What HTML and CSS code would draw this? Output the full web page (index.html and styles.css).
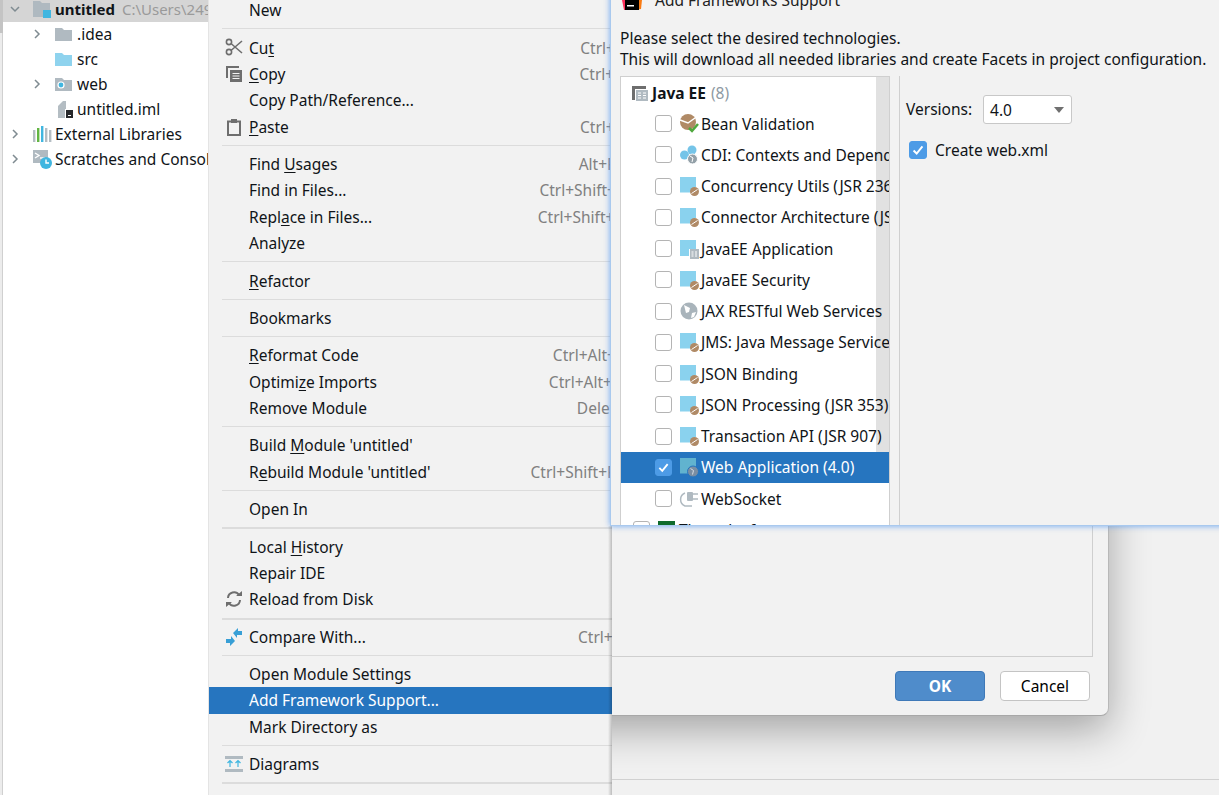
FILE: index.html
```html
<!DOCTYPE html>
<html lang="en">
<head>
<meta charset="utf-8">
<title>Add Frameworks Support</title>
<link rel="stylesheet" href="styles.css">
</head>
<body>
<div class="desktop">

  <aside class="tree">
    <div class="tree-row selected lvl0">
      <svg class="chev" viewBox="0 0 12 12"><path d="M2 4l4 4 4-4"/></svg>
      <svg class="ic" viewBox="0 0 20 20"><path d="M1 2h7l2 2h8v14H1z" fill="#afb9c0"/><rect x="11" y="11" width="8" height="8" fill="#40b6e0"/></svg>
      <b>untitled</b><span class="muted">C:\Users\2497</span>
    </div>
    <div class="tree-row lvl1">
      <svg class="chev" viewBox="0 0 12 12"><path d="M4 2l4 4-4 4"/></svg>
      <svg class="ic" viewBox="0 0 20 20"><path d="M1 4h7l2 2h8v11H1z" fill="#b0bac1"/></svg>
      <span>.idea</span>
    </div>
    <div class="tree-row lvl1">
      <span class="chev"></span>
      <svg class="ic" viewBox="0 0 20 20"><path d="M1 4h7l2 2h8v11H1z" fill="#8fd3ee"/></svg>
      <span>src</span>
    </div>
    <div class="tree-row lvl1">
      <svg class="chev" viewBox="0 0 12 12"><path d="M4 2l4 4-4 4"/></svg>
      <svg class="ic" viewBox="0 0 20 20"><path d="M1 4h7l2 2h8v11H1z" fill="#b0bac1"/><circle cx="7" cy="11" r="3.6" fill="#fff"/><circle cx="7" cy="11" r="2.4" fill="#40b6e0"/></svg>
      <span>web</span>
    </div>
    <div class="tree-row lvl1">
      <span class="chev"></span>
      <svg class="ic" viewBox="0 0 20 20"><path d="M4 7l5-5h3v17H4z" fill="#b4bdc3"/><rect x="11" y="10" width="8" height="9" fill="#fff"/><rect x="12" y="11" width="7" height="8" fill="#26282b"/><rect x="14" y="16" width="3" height="1" fill="#fff"/></svg>
      <span>untitled.iml</span>
    </div>
    <div class="tree-row lvl0">
      <svg class="chev" viewBox="0 0 12 12"><path d="M4 2l4 4-4 4"/></svg>
      <svg class="ic" viewBox="0 0 20 20"><rect x="1" y="6" width="2.4" height="12" fill="#b4bdc3"/><rect x="5" y="4" width="2.4" height="14" fill="#62b543"/><rect x="9" y="2" width="2.4" height="16" fill="#40b6e0"/><rect x="13" y="4" width="2.4" height="14" fill="#b4bdc3"/><rect x="17" y="6" width="2.4" height="12" fill="#b4bdc3"/></svg>
      <span>External Libraries</span>
    </div>
    <div class="tree-row lvl0">
      <svg class="chev" viewBox="0 0 12 12"><path d="M4 2l4 4-4 4"/></svg>
      <svg class="ic" viewBox="0 0 20 20"><rect x="1" y="1" width="15" height="13" fill="#b0bac1"/><path d="M3 4l4 2.5L3 9" fill="none" stroke="#fff" stroke-width="1.4"/><path d="M8 9h5" stroke="#fff" stroke-width="1.4"/><circle cx="14" cy="14" r="6" fill="#40b6e0"/><path d="M14 10.5V14h3" fill="none" stroke="#fff" stroke-width="1.4"/></svg>
      <span>Scratches and Consoles</span>
    </div>
  </aside>

  <div class="bottom-bar"></div>

  <section class="back-dialog">
    <div class="back-panel"></div>
    <div class="actions">
      <button class="btn primary">OK</button>
      <button class="btn">Cancel</button>
    </div>
  </section>

  <nav class="menu">
    <div class="item"><span class="label">New</span></div>
    <hr>
    <div class="item"><svg class="mi" viewBox="0 0 18 18"><g fill="none" stroke="#6e6e6e" stroke-width="1.6"><circle cx="4" cy="4" r="2.6"/><circle cx="4" cy="14" r="2.6"/><path d="M6 5.500L17 15M6 12.500L17 3"/></g></svg><span class="label">Cu<u>t</u></span><span class="key">Ctrl+X</span></div>
    <div class="item"><svg class="mi" viewBox="0 0 18 18"><path d="M1 1h13v2H3v10H1z" fill="#6e6e6e"/><rect x="5" y="5" width="12" height="12" fill="#6e6e6e"/><path d="M7.500 8.500h7M7.500 11h7M7.500 13.500h7" stroke="#f2f2f2"/></svg><span class="label"><u>C</u>opy</span><span class="key">Ctrl+C</span></div>
    <div class="item"><span class="label">Copy Path/Reference...</span></div>
    <div class="item"><svg class="mi" viewBox="0 0 18 18"><path d="M3 3.500h12v13.500H3z" fill="none" stroke="#6e6e6e" stroke-width="2"/><rect x="6" y="1" width="6" height="4" fill="#6e6e6e"/></svg><span class="label"><u>P</u>aste</span><span class="key">Ctrl+V</span></div>
    <hr>
    <div class="item"><span class="label">Find <u>U</u>sages</span><span class="key">Alt+F7</span></div>
    <div class="item"><span class="label">Find in Files...</span><span class="key">Ctrl+Shift+F</span></div>
    <div class="item"><span class="label">Repl<u>a</u>ce in Files...</span><span class="key">Ctrl+Shift+R</span></div>
    <div class="item"><span class="label">Analyze</span></div>
    <hr>
    <div class="item"><span class="label"><u>R</u>efactor</span></div>
    <hr>
    <div class="item"><span class="label">Bookmarks</span></div>
    <hr>
    <div class="item"><span class="label"><u>R</u>eformat Code</span><span class="key">Ctrl+Alt+L</span></div>
    <div class="item"><span class="label">Optimi<u>z</u>e Imports</span><span class="key">Ctrl+Alt+O</span></div>
    <div class="item"><span class="label">Remove Module</span><span class="key">Delete</span></div>
    <hr>
    <div class="item"><span class="label">Build <u>M</u>odule 'untitled'</span></div>
    <div class="item"><span class="label">R<u>e</u>build Module 'untitled'</span><span class="key">Ctrl+Shift+F9</span></div>
    <hr>
    <div class="item"><span class="label">Open In</span></div>
    <hr class="thick">
    <div class="item"><span class="label">Local <u>H</u>istory</span></div>
    <div class="item"><span class="label">Repair IDE</span></div>
    <div class="item"><svg class="mi" viewBox="0 0 18 18"><g fill="none" stroke="#6e6e6e" stroke-width="2"><path d="M3 8a6 6 0 0 1 11-3"/><path d="M15 10a6 6 0 0 1-11 3"/></g><path d="M11 6h6V1zM7 12H1v5z" fill="#6e6e6e"/></svg><span class="label">Reload from Disk</span></div>
    <hr class="thick">
    <div class="item"><svg class="mi" viewBox="0 0 18 18"><path d="M1 11h5V8l4 5-5 5v-3H1zM17 7h-5v3L8 5l5-5v3h4z" fill="#389fd6"/></svg><span class="label">Compare With...</span><span class="key">Ctrl+D</span></div>
    <hr>
    <div class="item"><span class="label">Open Module Settings</span></div>
    <div class="item active"><span class="label">Add Framework Support...</span></div>
    <div class="item"><span class="label">Mark Directory as</span></div>
    <hr>
    <div class="item"><svg class="mi" viewBox="0 0 18 18"><rect y="1" width="18" height="3" fill="#b0bac1"/><rect y="14" width="18" height="3" fill="#b0bac1"/><path d="M5 12V6M2.500 8L5 5.500 7.500 8M13 12V6M10.500 8L13 5.500 15.500 8" fill="none" stroke="#40b6e0" stroke-width="1.200"/></svg><span class="label">Diagrams</span></div>
    <hr class="thick">
  </nav>

  <section class="front-dialog">
    <header class="title">
      <svg class="logo" viewBox="0 0 20 20"><path d="M0 10h6v10H2z" fill="#fe315d"/><path d="M14 10h6l-1 9-5 1z" fill="#f97a12"/><rect x="3" y="8" width="14" height="12" fill="#000"/><rect x="5" y="15" width="7" height="1.500" fill="#fff"/></svg>
      <span>Add Frameworks Support</span>
    </header>
    <p class="intro">Please select the desired technologies.<br>This will download all needed libraries and create Facets in project configuration.</p>
    <div class="split">
      <div class="list">
        <div class="scrollbar"></div>
        <div class="group"><svg class="gi" viewBox="0 0 16 16"><path d="M0 1h14v3H3v11H0z" fill="#6e6e6e"/><rect x="4" y="5" width="12" height="11" fill="#b0bac1"/><path d="M6 8h3M6 10.500h3M6 13h3M11 8h3M11 10.500h3M11 13h3" stroke="#fff"/></svg><b>Java EE</b><span class="count">(8)</span></div>
        <div class="row"><span class="cb"></span><svg class="fi" viewBox="0 0 20 20"><circle cx="9" cy="8" r="8" fill="#b08a66"/><path d="M1 6l8 3 7-5" stroke="#fff" fill="none" stroke-width="1.500"/><path d="M10 14l3 3 6-7" stroke="#4fa83d" fill="none" stroke-width="2.500"/></svg><span>Bean Validation</span></div>
        <div class="row"><span class="cb"></span><svg class="fi" viewBox="0 0 20 20"><circle cx="5.500" cy="10" r="4.500" fill="#75c4e8"/><circle cx="13" cy="5" r="4.500" fill="#75c4e8"/><circle cx="13.500" cy="14" r="5" fill="#93a0a8" stroke="#fff"/><path d="M11 11l3 2-1 4" stroke="#fff" fill="none"/></svg><span>CDI: Contexts and Dependency Injection</span></div>
        <div class="row"><span class="cb"></span><svg class="fi" viewBox="0 0 20 20"><path d="M1 1h16v9.500l-5.500 6H1z" fill="#8ad2ee"/><circle cx="15.500" cy="15.500" r="4.500" fill="#b08a66"/><path d="M12.500 17.500l6-4" stroke="#fff"/></svg><span>Concurrency Utils (JSR 236)</span></div>
        <div class="row"><span class="cb"></span><svg class="fi" viewBox="0 0 20 20"><path d="M1 1h16v9.500l-5.500 6H1z" fill="#8ad2ee"/><circle cx="15.500" cy="15.500" r="4.500" fill="#b08a66"/><path d="M12.500 17.500l6-4" stroke="#fff"/></svg><span>Connector Architecture (JSR 322)</span></div>
        <div class="row"><span class="cb"></span><svg class="fi" viewBox="0 0 20 20"><path d="M1 1h16v9H10v7H1z" fill="#8ad2ee"/><rect x="11" y="10" width="9" height="10" fill="#b0bac1"/><path d="M12.500 13h2M12.500 15h2M12.500 17h2M16 13h2M16 15h2M16 17h2" stroke="#fff"/></svg><span>JavaEE Application</span></div>
        <div class="row"><span class="cb"></span><svg class="fi" viewBox="0 0 20 20"><path d="M1 1h16v9.500l-5.500 6H1z" fill="#8ad2ee"/><circle cx="15.500" cy="15.500" r="4.500" fill="#b08a66"/><path d="M12.500 17.500l6-4" stroke="#fff"/></svg><span>JavaEE Security</span></div>
        <div class="row"><span class="cb"></span><svg class="fi" viewBox="0 0 20 20"><circle cx="10" cy="10" r="8.500" fill="#a9b4bb"/><path d="M5 4l6 3-1 4-3 1zM13 12l4-1-2 5-3 1z" fill="#fff"/></svg><span>JAX RESTful Web Services</span></div>
        <div class="row"><span class="cb"></span><svg class="fi" viewBox="0 0 20 20"><path d="M1 1h16v9.500l-5.500 6H1z" fill="#8ad2ee"/><circle cx="15.500" cy="15.500" r="4.500" fill="#b08a66"/><path d="M12.500 17.500l6-4" stroke="#fff"/></svg><span>JMS: Java Message Service</span></div>
        <div class="row"><span class="cb"></span><svg class="fi" viewBox="0 0 20 20"><path d="M1 1h16v9.500l-5.500 6H1z" fill="#8ad2ee"/><circle cx="15.500" cy="15.500" r="4.500" fill="#b08a66"/><path d="M12.500 17.500l6-4" stroke="#fff"/></svg><span>JSON Binding</span></div>
        <div class="row"><span class="cb"></span><svg class="fi" viewBox="0 0 20 20"><path d="M1 1h16v9.500l-5.500 6H1z" fill="#8ad2ee"/><circle cx="15.500" cy="15.500" r="4.500" fill="#b08a66"/><path d="M12.500 17.500l6-4" stroke="#fff"/></svg><span>JSON Processing (JSR 353)</span></div>
        <div class="row"><span class="cb"></span><svg class="fi" viewBox="0 0 20 20"><path d="M1 1h16v9.500l-5.500 6H1z" fill="#8ad2ee"/><circle cx="15.500" cy="15.500" r="4.500" fill="#b08a66"/><path d="M12.500 17.500l6-4" stroke="#fff"/></svg><span>Transaction API (JSR 907)</span></div>
        <div class="row sel"><span class="cb on"><svg viewBox="0 0 18 18"><path d="M4 9.500l3.500 3.500L14 5"/></svg></span><svg class="fi" viewBox="0 0 20 20"><path d="M1 1h16v9.500l-5.500 6H1z" fill="#61b3cf"/><circle cx="14" cy="14.500" r="5.500" fill="#7a8ea3" stroke="#2675bf"/><path d="M11.500 11.500l3 2-1 4" stroke="#d6dde3" fill="none"/></svg><span>Web Application (4.0)</span></div>
        <div class="row"><span class="cb"></span><svg class="fi" viewBox="0 0 20 20"><path d="M6 4a7 7 0 0 0 0 13h7" fill="none" stroke="#b0bac1" stroke-width="1.500"/><rect x="8" y="3" width="6" height="9" rx="1" fill="#b0bac1"/><path d="M14 5h5M14 10h5" stroke="#b0bac1" stroke-width="1.500"/></svg><span>WebSocket</span></div>
        <div class="group-cut"><span class="cb"></span><svg class="fi" viewBox="0 0 20 20"><rect x="1" y="1" width="17" height="17" fill="#0f6b2c"/></svg><span>Thymeleaf</span></div>
      </div>
      <div class="detail">
        <div class="versions">
          <label>Versions:</label>
          <div class="select"><span>4.0</span><i class="caret"></i></div>
        </div>
        <div class="create"><span class="cb on"><svg viewBox="0 0 18 18"><path d="M4 9.500l3.500 3.500L14 5"/></svg></span><span>Create web.xml</span></div>
      </div>
    </div>
  </section>
</div>
</body>
</html>
```

FILE: styles.css
```css
* { box-sizing: border-box; }
html, body { margin: 0; padding: 0; }
body {
  width: 1219px; height: 795px; overflow: hidden;
  background: #f0f0f0;
  font-family: "Noto Sans", "Open Sans", sans-serif;
  font-size: 15.500px; color: #101418;
}
.desktop { position: relative; width: 1219px; height: 795px; overflow: hidden; background: #f1f1f1; }

/* Project tree */
.tree { position: absolute; left: 0; top: -3px; width: 208px; height: 798px; padding-left: 3px; background: linear-gradient(to right, #ececec 2px, #d0d0d0 2px, #d0d0d0 3px, #fff 3px); overflow: hidden; }
.tree::before { content: ""; position: absolute; left: 0; top: 0; width: 3px; height: 36px; background: #c4c4c4; }
.tree-row { display: flex; align-items: center; height: 25px; padding-bottom: 2px; white-space: nowrap; }
.tree-row.selected { background: #d5d5d5; }
.tree-row.lvl0 { padding-left: 6px; }
.tree-row.lvl1 { padding-left: 28px; }
.chev { flex: none; width: 12px; height: 12px; margin-right: 11px; fill: none; stroke: #7f8b91; stroke-width: 1.500; }
.ic { flex: none; width: 20px; height: 20px; margin-right: 3px; }
.tree b { font-weight: 700; font-size: 15px; }
.muted { color: #9a9a9a; margin-left: 7px; font-size: 15px; }

.bottom-bar { position: absolute; left: 612px; right: 0; top: 779px; bottom: 0; border-top: 1px solid #d1d1d1; }

/* Back dialog */
.back-dialog { position: absolute; left: 400px; top: 300px; width: 709px; height: 416px; background: #f2f2f2; border-radius: 0 0 8px 0; border-right: 1px solid #b8b8b8; border-bottom: 1px solid #a8a8a8; box-shadow: 0 14px 40px rgba(0,0,0,.32); }
.back-panel { position: absolute; right: 15px; top: 0; width: 600px; height: 357px; border-right: 1px solid #cfcfcf; border-bottom: 1px solid #cfcfcf; }
.actions { position: absolute; right: 18px; bottom: 14px; display: flex; gap: 15px; }
.btn { width: 90px; height: 30px; border: 1px solid #c4c4c4; border-radius: 4px; background: #fff; font: 15.500px "Noto Sans", sans-serif; color: #000; padding: 0; }
.btn.primary { background: #4f8ccb; border-color: #3f79b8; color: #fff; font-weight: 700; }

/* Context menu */
.menu { position: absolute; left: 208px; top: -3px; width: 404px; height: 798px; background: #f2f2f2; border-left: 1px solid #e4e4e4; overflow: hidden; }
.menu::after { content: ""; position: absolute; right: 0; top: 529px; bottom: 0; width: 4px; background: linear-gradient(to right, rgba(0,0,0,0), rgba(0,0,0,.22)); }
.menu hr { height: 1px; margin: 5px 0 5px 13px; border: 0; background: #dcdcdc; }
.menu hr.thick { height: 2px; margin-bottom: 4px; }
.item { position: relative; display: flex; align-items: center; height: 26.380px; padding-left: 40px; white-space: nowrap; }
.item.active { background: #2675bf; color: #fff; }
.mi { position: absolute; left: 16px; top: 4px; width: 18px; height: 18px; }
.key { position: absolute; right: -12px; color: #808080; }
u { text-underline-offset: 2px; }

/* Front dialog */
.front-dialog { position: absolute; left: 610px; top: -17px; width: 620px; height: 543px; background: #f2f2f2; border-left: 1px solid #a9c9ee; border-bottom: 1px solid #a9c9ee; box-shadow: 0 0 6px rgba(90,155,240,.85); padding: 0 0 0 9px; overflow: hidden; }
.title { display: flex; align-items: center; height: 28px; padding-left: 2px; margin-top: 3px; gap: 13px; color: #222; }
.logo { flex: none; width: 20px; height: 20px; }
.intro { margin: 14px 0 0; line-height: 21px; white-space: nowrap; }
.split { display: flex; margin-top: 6px; gap: 9px; }
.list { position: relative; flex: none; width: 270px; height: 450px; background: #fff; border: 1px solid #cfcfcf; overflow: hidden; }
.scrollbar { position: absolute; right: 0; top: 0; width: 13px; height: 376px; background: #e1e1e1; }
.group { display: flex; align-items: center; height: 31px; padding-left: 11px; position: relative; white-space: nowrap; }
.gi { width: 16px; height: 16px; margin-right: 4px; }
.count { color: #8e9aa3; margin-left: 5px; }
.row { position: relative; display: flex; align-items: center; height: 31.250px; padding-left: 34px; white-space: nowrap; overflow: hidden; }
.row.sel { background: #2675bf; color: #fff; }
.cb { flex: none; display: inline-flex; width: 17px; height: 17px; margin-right: 7px; background: #fff; border: 1px solid #b4b4b4; border-radius: 3px; }
.cb.on { background: #4d9be6; border-color: #4d9be6; }
.cb svg { fill: none; stroke: #fff; stroke-width: 2.200; width: 100%; height: 100%; }
.fi { flex: none; width: 20px; height: 20px; margin-right: 2px; }
.group-cut { display: flex; align-items: center; height: 31px; padding-left: 12px; white-space: nowrap; }
.detail { flex: 1; border-left: 1px solid #cfcfcf; height: 450px; padding: 19px 0 0 6px; }
.versions { display: flex; align-items: center; gap: 11px; height: 29px; }
.versions label { padding-bottom: 2px; }
.select { position: relative; flex: none; width: 89px; height: 29px; background: #fff; border: 1px solid #c8c8c8; border-radius: 3px; padding: 3px 0 0 6px; }
.caret { position: absolute; right: 7px; top: 11px; border-left: 5.500px solid transparent; border-right: 5.500px solid transparent; border-top: 6px solid #707070; }
.create { display: flex; align-items: center; margin: 11px 0 0 3px; height: 30px; }
.create .cb { width: 18px; height: 18px; margin-right: 8px; }
```
